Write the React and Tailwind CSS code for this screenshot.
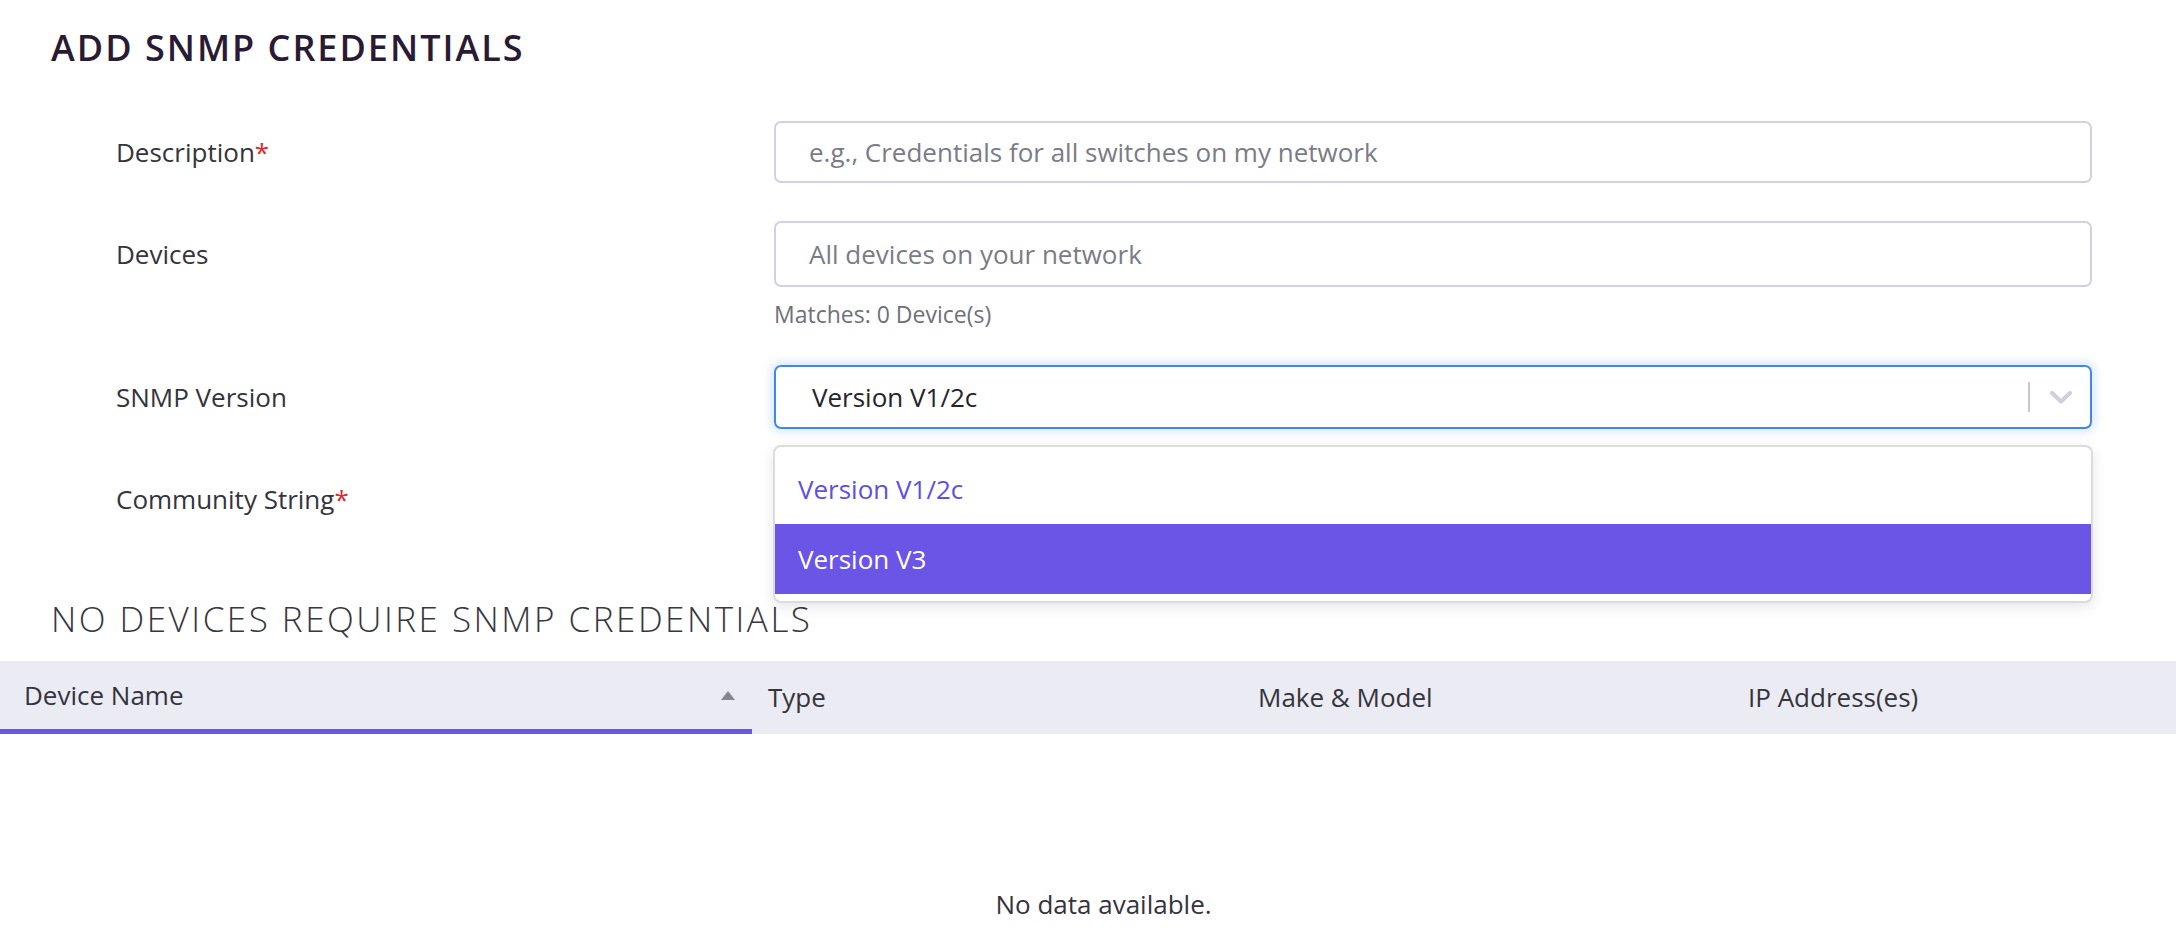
import React from "react";

function Label({ children, required }) {
  return (
    <div className="w-[658px] shrink-0 text-[26px] leading-[36px] text-[#35343d]">
      {children}
      {required && <span className="text-[#e3262b]">*</span>}
    </div>
  );
}

export default function App() {
  return (
    <div className="w-[2176px] h-[952px] overflow-hidden bg-white font-['Open_Sans',sans-serif]">
      <h1 className="pl-[51px] pt-[26px] text-[36px] leading-[44px] font-semibold tracking-[2px] text-[#2a1b35]">
        ADD SNMP CREDENTIALS
      </h1>

      <div className="mt-[51px] pl-[116px] pr-[84px] flex flex-col">
        {/* Description */}
        <div className="flex items-center">
          <Label required>Description</Label>
          <div className="flex-1 h-[62px] rounded-[7px] border-2 border-[#d2d0e2] flex items-center pl-[33px] text-[26px] text-[#7b7b86]">
            e.g., Credentials for all switches on my network
          </div>
        </div>

        {/* Devices */}
        <div className="flex items-start mt-[38px]">
          <div className="h-[66px] flex items-center">
            <Label>Devices</Label>
          </div>
          <div className="flex-1 flex flex-col">
            <div className="h-[66px] rounded-[7px] border-2 border-[#d2d0e2] flex items-center pl-[33px] text-[26px] text-[#7b7b86]">
              All devices on your network
            </div>
            <div className="mt-[11px] text-[23px] leading-[32px] text-[#707079]">Matches: 0 Device(s)</div>
          </div>
        </div>

        {/* SNMP Version */}
        <div className="flex items-center mt-[35px]">
          <Label>SNMP Version</Label>
          <div className="relative flex-1">
            <div className="h-[64px] rounded-[7px] border-2 border-[#3f88e6] shadow-[0_0_10px_3px_rgba(74,141,230,0.22)] flex items-center pl-[36px] pr-[18px] text-[26px] text-[#25242b]">
              <span className="flex-1">Version V1/2c</span>
              <span className="w-[2px] h-[30px] bg-[#c8c8cf]" />
              <svg className="ml-[20px] w-[22px] h-[13px]" viewBox="0 0 22 13" fill="none">
                <path d="M2 2 L11 10.5 L20 2" stroke="#d1cee0" strokeWidth="4" strokeLinecap="round" strokeLinejoin="round" />
              </svg>
            </div>
            <div className="absolute z-10 left-[-1px] right-[-1px] top-[80px] rounded-[8px] border-2 border-[#dcdcdf] bg-white py-[7px] shadow-[0_4px_14px_rgba(0,0,0,0.10)] text-[26px]">
              <div className="h-[70px] flex items-center pl-[23px] text-[#5f4fe3]">Version V1/2c</div>
              <div className="h-[70px] flex items-center pl-[23px] bg-[#6b55e6] text-white">Version V3</div>
            </div>
          </div>
        </div>

        {/* Community String */}
        <div className="flex items-center mt-[38px]">
          <Label required>Community String</Label>
          <div className="flex-1 h-[64px] rounded-[7px] border-2 border-[#d2d0e2]" />
        </div>
      </div>

      <h2 className="mt-[66px] pl-[51px] text-[35px] leading-[44px] font-light tracking-[2.5px] text-[#38373f]">
        NO DEVICES REQUIRE SNMP CREDENTIALS
      </h2>

      <div className="mt-[20px] flex h-[73px] bg-[#ebebf3] text-[26px] text-[#35343d]">
        <div className="w-[752px] shrink-0 flex items-center pl-[24px] pr-[17px] border-b-[5px] border-[#6b55e6]">
          <span className="flex-1">Device Name</span>
          <svg className="w-[14px] h-[9px]" viewBox="0 0 14 9">
            <path d="M7 0 L14 9 L0 9 Z" fill="#88878f" />
          </svg>
        </div>
        <div className="w-[490px] shrink-0 flex items-center pl-[16px]">Type</div>
        <div className="w-[490px] shrink-0 flex items-center pl-[16px]">Make &amp; Model</div>
        <div className="flex-1 flex items-center pl-[16px]">IP Address(es)</div>
      </div>

      <div className="mt-[152px] pl-[31px] text-center text-[26px] leading-[36px] text-[#35343d]">
        No data available.
      </div>
    </div>
  );
}
